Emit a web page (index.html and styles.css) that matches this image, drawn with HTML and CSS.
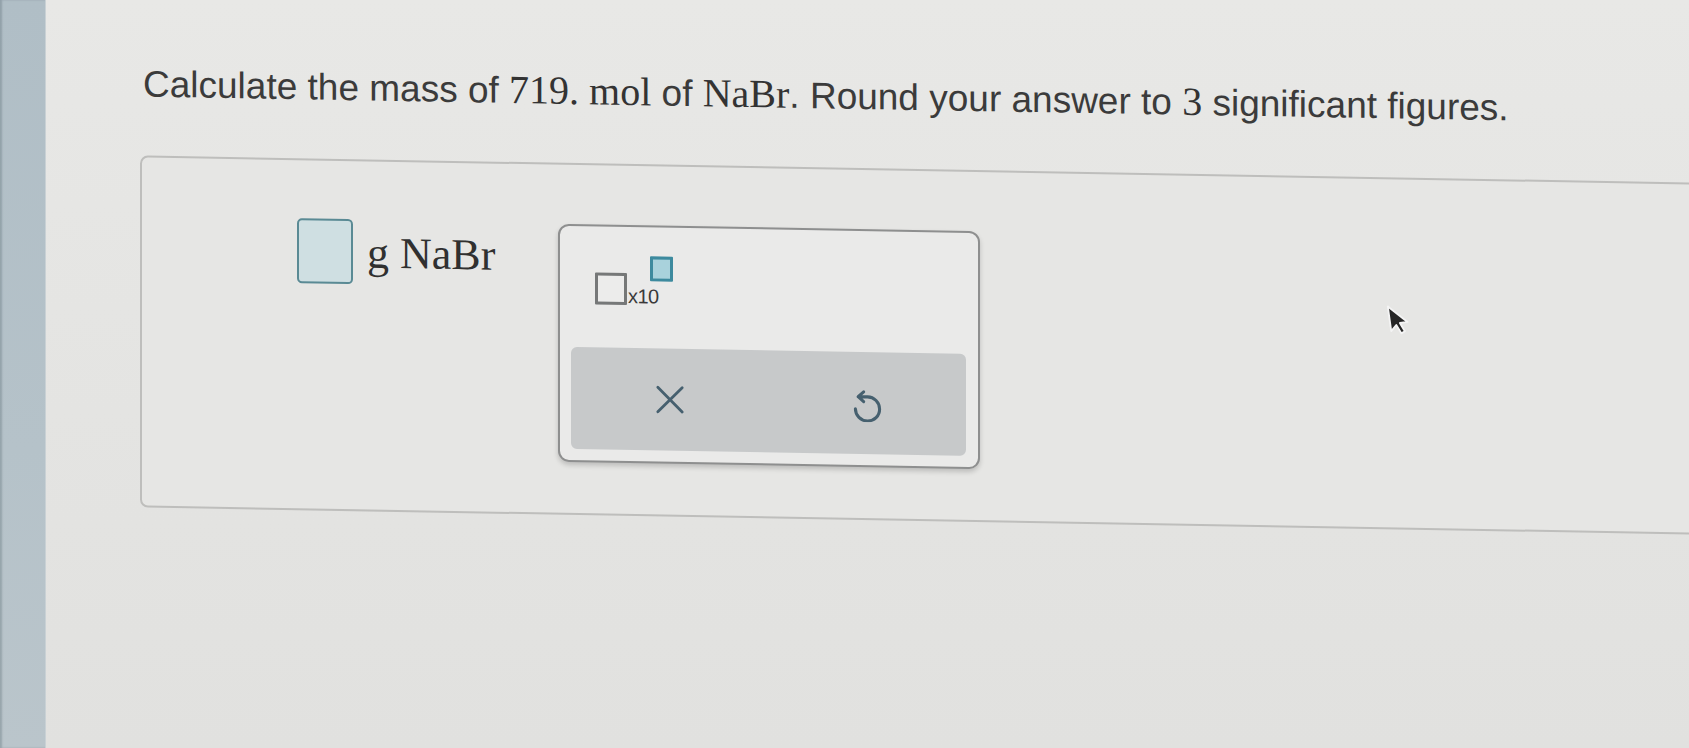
FILE: index.html
```html
<!DOCTYPE html>
<html lang="en">
<head>
<meta charset="utf-8">
<title>Calculate the mass</title>
<link rel="stylesheet" href="styles.css">
</head>
<body>
<div class="screen">
  <aside class="rail"></aside>
  <main class="content">
    <p class="question"><span class="txt">Calculate the mass of </span><span class="math">719. mol</span><span class="txt"> of </span><span class="math">NaBr</span><span class="txt">. Round your answer to </span><span class="math">3</span><span class="txt"> significant figures.</span></p>
    <section class="panel">
      <div class="answer">
        <span class="field"></span>
        <span class="unit">g NaBr</span>
      </div>
      <div class="keypad">
        <div class="sci">
          <span class="base"></span>
          <span class="x10">x10</span>
          <span class="exp"></span>
        </div>
        <div class="actions">
          <button class="act" type="button" aria-label="Clear">
            <svg class="icon" viewBox="0 0 32 32" width="30" height="30"><path d="M3 3 L29 29 M29 3 L3 29" fill="none" stroke="#46606f" stroke-width="3" stroke-linecap="round"/></svg>
          </button>
          <button class="act" type="button" aria-label="Undo">
            <svg class="icon undo" viewBox="3 1 28 30" width="31" height="33"><path d="M17 8 A11 11 0 1 1 6 19 M17 8 H8.5 M13.5 3.5 L8.5 8 L13.5 12.5" fill="none" stroke="#46606f" stroke-width="2.8" stroke-linecap="round" stroke-linejoin="round"/></svg>
          </button>
        </div>
      </div>
    </section>
  </main>
  <svg class="cursor" viewBox="0 0 16 24" width="24" height="34"><path d="M1.5 1.5 L1.5 19 L5.6 15.2 L8.4 21.6 L11 20.4 L8.3 14.2 L13.8 14.2 Z" fill="#262626" stroke="#f4f4f4" stroke-width="1.3" stroke-linejoin="round"/></svg>
</div>
</body>
</html>
```

FILE: styles.css
```css
html, body {
  margin: 0;
  padding: 0;
  height: 100%;
}

body {
  background: linear-gradient(to bottom, #e8e8e6 0%, #e4e4e2 55%, #e1e1df 100%);
  overflow: hidden;
  font-family: "Liberation Sans", Arial, sans-serif;
}

.screen {
  position: relative;
  display: flex;
  width: 1689px;
  height: 748px;
  overflow: hidden;
}

.rail {
  flex: 0 0 45px;
  background: linear-gradient(to bottom, #b0bec6 0%, #b5c2c9 60%, #bac5cb 100%);
  box-shadow: inset 2px 0 2px rgba(90, 105, 115, 0.35), 1px 0 0 #c9d1d5;
}

.content {
  flex: 1 1 auto;
  min-width: 0;
  padding-left: 95px;
  transform: skewY(1deg);
  transform-origin: -45px 0;
}

.question {
  margin: 59px 0 0 0;
  padding-left: 3px;
  line-height: 44px;
  white-space: nowrap;
  color: #3b3b3b;
}

.txt {
  font-family: "Liberation Sans", Arial, sans-serif;
  font-size: 37px;
}

.math {
  font-family: "Liberation Serif", "Times New Roman", serif;
  font-size: 40px;
  color: #333;
}

.panel {
  box-sizing: border-box;
  display: flex;
  align-items: flex-start;
  margin-top: 42px;
  width: 1600px;
  height: 352px;
  padding: 58px 0 0 155px;
  border: 2px solid #bebebc;
  border-radius: 8px;
  background: #e6e6e4;
}

.answer {
  display: flex;
  align-items: flex-start;
  flex: 0 0 261px;
}

.field {
  box-sizing: border-box;
  width: 56px;
  height: 65px;
  border: 2.5px solid #5a8a94;
  border-radius: 5px;
  background: #cfdfe2;
}

.unit {
  margin: 12px 0 0 14px;
  font-family: "Liberation Serif", "Times New Roman", serif;
  font-size: 44px;
  line-height: 1;
  color: #303030;
}

.keypad {
  box-sizing: border-box;
  display: flex;
  flex-direction: column;
  margin-top: 1px;
  width: 422px;
  height: 238px;
  padding: 0 12px 11px 11px;
  border: 2px solid #8e8f8f;
  border-radius: 11px;
  background: #eaeae9;
  box-shadow: 0 3px 5px rgba(0, 0, 0, 0.18);
}

.sci {
  display: flex;
  align-items: flex-start;
  margin-top: 29px;
  padding-left: 24px;
}

.base {
  box-sizing: border-box;
  margin-top: 17px;
  width: 32px;
  height: 32px;
  border: 3px solid #767878;
  border-radius: 1px;
  background: #ececeb;
}

.x10 {
  margin: 31px 0 0 1px;
  font-size: 20px;
  line-height: 19px;
  letter-spacing: -0.5px;
  color: #3a3a3a;
}

.exp {
  box-sizing: border-box;
  margin-left: -9px;
  width: 23px;
  height: 25px;
  border: 3.5px solid #3d8a9e;
  border-radius: 1px;
  background: #a9d2dc;
}

.actions {
  display: flex;
  margin-top: auto;
  height: 102px;
  border-radius: 6px;
  background: #c7c9ca;
}

.act {
  flex: 1 1 0;
  display: flex;
  align-items: center;
  justify-content: center;
  padding: 0;
  border: 0;
  background: transparent;
}

.undo {
  margin-top: 4px;
}

.cursor {
  position: absolute;
  left: 1387px;
  top: 303px;
  transform: rotate(-8deg);
}
```
